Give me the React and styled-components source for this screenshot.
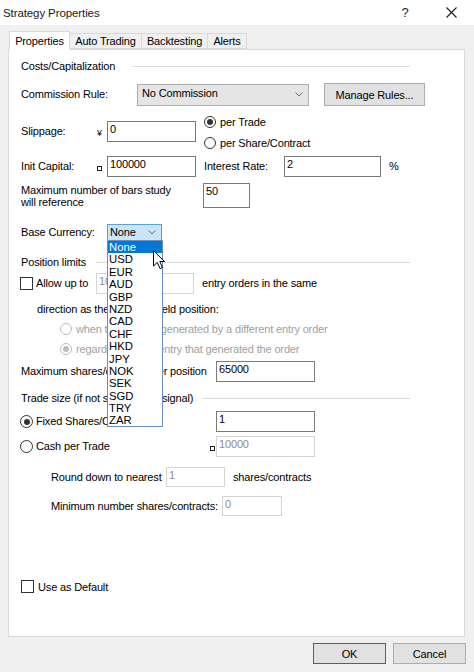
import React from 'react';
import styled, { createGlobalStyle } from 'styled-components';

const GlobalStyle = createGlobalStyle`
  html, body {
    margin: 0;
    padding: 0;
    background: #f0f0f0;
  }
  body {
    font-family: 'Liberation Sans', Arial, sans-serif;
    font-size: 11px;
    letter-spacing: -0.15px;
    color: #000;
  }
`;

const Dialog = styled.div`
  width: 474px;
  height: 672px;
  display: flex;
  flex-direction: column;
  background: #f0f0f0;
  overflow: hidden;
`;

const TitleBar = styled.div`
  height: 25px;
  display: flex;
  align-items: center;
  background: #ffffff;
  padding-left: 3px;
`;

const Title = styled.div`
  flex: 1;
  font-size: 11.5px;
  letter-spacing: -0.1px;
  color: #1a1a1a;
`;

const TitleButton = styled.div`
  width: 46px;
  height: 25px;
  display: flex;
  align-items: center;
  justify-content: center;
  font-size: 13px;
  color: #222;
`;

const TabStrip = styled.div`
  margin-top: 6px;
  height: 18px;
  padding-left: 9px;
  display: flex;
  align-items: flex-end;
  position: relative;
  z-index: 2;
`;

const Tab = styled.div`
  width: ${(p) => p.$w}px;
  height: ${(p) => (p.$active ? 19 : 16)}px;
  margin-bottom: ${(p) => (p.$active ? -1 : 0)}px;
  margin-left: -1px;
  box-sizing: border-box;
  border: 1px solid #d9d9d9;
  border-bottom: ${(p) => (p.$active ? '1px solid #ffffff' : '1px solid #d9d9d9')};
  background: ${(p) => (p.$active ? '#ffffff' : '#f0f0f0')};
  display: flex;
  align-items: center;
  justify-content: center;
  white-space: nowrap;
  position: relative;
  z-index: ${(p) => (p.$active ? 2 : 1)};
  &:first-child {
    margin-left: 0;
  }
`;

const Panel = styled.div`
  margin: 0 9px 0 8px;
  height: 588px;
  box-sizing: border-box;
  background: #ffffff;
  border: 1px solid #d9d9d9;
  padding: 9px 0 0 12px;
  display: flex;
  flex-direction: column;
  position: relative;
  z-index: 1;
`;

const Row = styled.div`
  display: flex;
  align-items: ${(p) => p.$align || 'center'};
  height: ${(p) => p.$h}px;
  margin-top: ${(p) => p.$mt || 0}px;
  margin-left: ${(p) => p.$ml || 0}px;
  white-space: nowrap;
  color: ${(p) => (p.$muted ? '#a0a0a0' : '#000')};
`;

const Section = styled.div`
  display: flex;
  align-items: center;
  height: 14px;
  width: 389px;
  margin-top: ${(p) => p.$mt || 0}px;
  white-space: nowrap;
`;

const Rule = styled.div`
  flex: 1;
  height: 1px;
  background: #dcdcdc;
  margin-left: ${(p) => p.$gap}px;
`;

const Label = styled.span`
  width: ${(p) => (p.$w ? `${p.$w}px` : 'auto')};
  flex-shrink: 0;
  margin-left: ${(p) => p.$ml || 0}px;
  line-height: ${(p) => p.$lh || 13}px;
  white-space: ${(p) => (p.$wrap ? 'normal' : 'nowrap')};
`;

const Prefix = styled.span`
  width: ${(p) => p.$w || 10}px;
  flex-shrink: 0;
  font-size: 9px;
  padding-top: 3px;
  box-sizing: border-box;
`;

const CurrencyMark = styled.span`
  width: ${(p) => p.$w || 10}px;
  flex-shrink: 0;
  display: flex;
  align-items: center;
  padding-top: 4px;
  box-sizing: border-box;
  &::before {
    content: '';
    width: 3px;
    height: 3px;
    border: 1.3px solid #222;
  }
`;

const TextBox = styled.div`
  width: ${(p) => p.$w}px;
  height: ${(p) => p.$h || 21}px;
  flex-shrink: 0;
  box-sizing: border-box;
  margin-left: ${(p) => p.$ml || 0}px;
  border: 1px solid ${(p) => (p.$disabled ? '#d4d4d4' : '#7a7a7a')};
  background: #ffffff;
  padding: 1px 0 0 2px;
  line-height: 13px;
  color: ${(p) => (p.$disabled ? '#8d8d8d' : '#000')};
`;

const Combo = styled.div`
  width: ${(p) => p.$w}px;
  height: ${(p) => p.$h}px;
  flex-shrink: 0;
  box-sizing: border-box;
  border: 1px solid ${(p) => (p.$open ? '#5a9fe0' : '#adadad')};
  background: ${(p) => (p.$open ? '#cce4f7' : '#e5e5e5')};
  display: flex;
  align-items: center;
  justify-content: space-between;
  padding: 0 5px 0 ${(p) => p.$pl || 4}px;
  position: relative;
  line-height: 13px;
`;

const ComboText = styled.span`
  margin-top: ${(p) => p.$mt || 0}px;
`;

const Button = styled.div`
  width: ${(p) => p.$w}px;
  height: ${(p) => p.$h || 21}px;
  flex-shrink: 0;
  box-sizing: border-box;
  margin-left: ${(p) => p.$ml || 0}px;
  background: #e1e1e1;
  border: 1px solid ${(p) => (p.$default ? '#0078d7' : '#adadad')};
  display: flex;
  align-items: center;
  justify-content: center;
`;

const RadioGroup = styled.div`
  display: flex;
  flex-direction: column;
  gap: 9px;
  margin-left: 8px;
`;

const Option = styled.div`
  display: flex;
  align-items: center;
  height: 12px;
  white-space: nowrap;
`;

const Radio = styled.span`
  width: ${(p) => p.$size || 12}px;
  height: ${(p) => p.$size || 12}px;
  flex-shrink: 0;
  box-sizing: border-box;
  border-radius: 50%;
  border: 1px solid ${(p) => (p.$disabled ? '#bcbcbc' : '#333333')};
  margin-left: ${(p) => p.$ml || 0}px;
  margin-right: ${(p) => p.$mr || 4}px;
  display: flex;
  align-items: center;
  justify-content: center;
  &::after {
    content: '';
    display: ${(p) => (p.$checked ? 'block' : 'none')};
    width: 6px;
    height: 6px;
    border-radius: 50%;
    background: ${(p) => (p.$disabled ? '#bcbcbc' : '#333333')};
  }
`;

const Check = styled.span`
  width: 13px;
  height: 13px;
  flex-shrink: 0;
  box-sizing: border-box;
  border: 1px solid #333333;
  background: #ffffff;
  margin-left: ${(p) => p.$ml || 0}px;
  margin-right: ${(p) => p.$mr || 3}px;
`;

const SelectWrap = styled.div`
  position: relative;
`;

const ListBox = styled.div`
  position: absolute;
  left: 0;
  top: 16px;
  width: 56px;
  height: 187px;
  box-sizing: border-box;
  background: #ffffff;
  border: 1px solid #6b8fc0;
  z-index: 10;
  display: flex;
  flex-direction: column;
`;

const ListItem = styled.div`
  height: 12.4px;
  line-height: 12.4px;
  padding-left: 1px;
  font-size: 11.3px;
  letter-spacing: 0;
  background: ${(p) => (p.$selected ? '#0078d7' : 'transparent')};
  color: ${(p) => (p.$selected ? '#ffffff' : '#000000')};
`;

const Pointer = styled.svg`
  position: absolute;
  left: 45px;
  top: 9px;
  z-index: 11;
`;

const Footer = styled.div`
  display: flex;
  justify-content: flex-end;
  gap: 7px;
  padding: 6px 8px 0 0;
`;

const Chevron = () => (
  <svg width="8" height="5" viewBox="0 0 8 5">
    <polyline points="0.5,0.5 4,4 7.5,0.5" fill="none" stroke="#6d6d6d" strokeWidth="1" />
  </svg>
);

const CloseGlyph = () => (
  <svg width="11" height="11" viewBox="0 0 11 11">
    <path d="M0.5,0.5 L10.5,10.5 M10.5,0.5 L0.5,10.5" stroke="#1a1a1a" strokeWidth="1.1" />
  </svg>
);

const currencies = ['None', 'USD', 'EUR', 'AUD', 'GBP', 'NZD', 'CAD', 'CHF', 'HKD', 'JPY', 'NOK', 'SEK', 'SGD', 'TRY', 'ZAR'];

const tabs = [
  { name: 'Properties', w: 61, active: true },
  { name: 'Auto Trading', w: 73 },
  { name: 'Backtesting', w: 67 },
  { name: 'Alerts', w: 40 },
];

export default function App() {
  return (
    <>
      <GlobalStyle />
      <Dialog>
        <TitleBar>
          <Title>Strategy Properties</Title>
          <TitleButton>?</TitleButton>
          <TitleButton><CloseGlyph /></TitleButton>
        </TitleBar>

        <TabStrip>
          {tabs.map((t) => (
            <Tab key={t.name} $w={t.w} $active={t.active}>{t.name}</Tab>
          ))}
        </TabStrip>

        <Panel>
          <Section>
            <span>Costs/Capitalization</span>
            <Rule $gap={17} />
          </Section>

          <Row $h={23} $mt={10}>
            <Label $w={116}>Commission Rule:</Label>
            <Combo $w={172} $h={22}>
              <ComboText $mt={-3}>No Commission</ComboText>
              <Chevron />
            </Combo>
            <Button $w={101} $h={23} $ml={15}>Manage Rules...</Button>
          </Row>

          <Row $h={34} $mt={10} $align="flex-start">
            <Row $h={21} $mt={5}>
              <Label $w={76}>Slippage:</Label>
              <Prefix>¥</Prefix>
              <TextBox $w={89}>0</TextBox>
            </Row>
            <RadioGroup>
              <Option><Radio $checked />per Trade</Option>
              <Option><Radio />per Share/Contract</Option>
            </RadioGroup>
          </Row>

          <Row $h={21} $mt={6}>
            <Label $w={76}>Init Capital:</Label>
            <CurrencyMark />
            <TextBox $w={89}>100000</TextBox>
            <Label $w={80} $ml={8}>Interest Rate:</Label>
            <TextBox $w={97}>2</TextBox>
            <Label $ml={8}>%</Label>
          </Row>

          <Row $h={25} $mt={6}>
            <Label $w={182} $lh={12} $wrap>Maximum number of bars study<br />will reference</Label>
            <TextBox $w={47} $h={25}>50</TextBox>
          </Row>

          <Row $h={17} $mt={16}>
            <Label $w={86}>Base Currency:</Label>
            <SelectWrap>
              <Combo $w={55} $h={17} $open $pl={2}>
                <span>None</span>
                <Chevron />
              </Combo>
              <ListBox>
                {currencies.map((c, i) => (
                  <ListItem key={c} $selected={i === 0}>{c}</ListItem>
                ))}
                <Pointer width="13" height="20" viewBox="0 0 13 20">
                  <path d="M0.5,0.5 L0.5,16 L4.3,12.4 L7,18.6 L9.4,17.6 L6.8,11.5 L11.6,11.5 Z" fill="#ffffff" stroke="#000000" strokeWidth="1" strokeLinejoin="round" />
                </Pointer>
              </ListBox>
            </SelectWrap>
          </Row>

          <Section $mt={14}>
            <span>Position limits</span>
            <Rule $gap={10} />
          </Section>

          <Row $h={21} $mt={4}>
            <Check $ml={-1} />
            <Label $w={60}>Allow up to</Label>
            <TextBox $w={98} $disabled>10</TextBox>
            <Label $ml={8}>entry orders in the same</Label>
          </Row>

          <Row $h={14} $mt={8} $ml={16}>
            direction as the currently held position:
          </Row>

          <Row $h={14} $mt={6} $ml={39} $muted>
            <Radio $disabled />when the order is generated by a different entry order
          </Row>

          <Row $h={14} $mt={6} $ml={39} $muted>
            <Radio $disabled $checked />regardless of the entry that generated the order
          </Row>

          <Row $h={21} $mt={5}>
            <Label $w={195}>Maximum shares/contracts per position</Label>
            <TextBox $w={99}>65000</TextBox>
          </Row>

          <Section $mt={9}>
            <span>Trade size (if not specified by signal)</span>
            <Rule $gap={9} />
          </Section>

          <Row $h={21} $mt={6}>
            <Radio $size={13} $ml={-1} $mr={3} $checked />
            <Label $w={180}>Fixed Shares/Contracts</Label>
            <TextBox $w={99}>1</TextBox>
          </Row>

          <Row $h={21} $mt={4}>
            <Radio $size={13} $ml={-1} $mr={3} />
            <Label $w={174}>Cash per Trade</Label>
            <CurrencyMark $w={6} />
            <TextBox $w={99} $disabled>10000</TextBox>
          </Row>

          <Row $h={20} $mt={10} $ml={30}>
            <Label $w={115}>Round down to nearest</Label>
            <TextBox $w={59} $h={20} $disabled>1</TextBox>
            <Label $ml={8}>shares/contracts</Label>
          </Row>

          <Row $h={20} $mt={9} $ml={30}>
            <Label $w={171}>Minimum number shares/contracts:</Label>
            <TextBox $w={60} $h={20} $disabled>0</TextBox>
          </Row>

          <Row $h={13} $mt={64}>
            <Check $mr={4} />
            <span>Use as Default</span>
          </Row>
        </Panel>

        <Footer>
          <Button $w={73} $default>OK</Button>
          <Button $w={73}>Cancel</Button>
        </Footer>
      </Dialog>
    </>
  );
}
